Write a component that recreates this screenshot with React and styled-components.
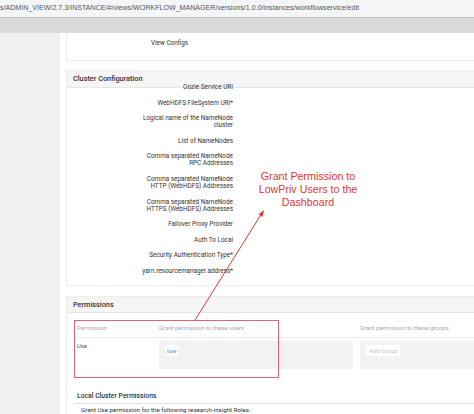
import React from "react"
import styled, {createGlobalStyle} from "styled-components"

const GlobalStyle = createGlobalStyle`
  html, body {
    margin: 0;
    padding: 0;
    background: #fff;
    overflow: hidden;
  }
`

const Page = styled.div`
  position: relative;
  width: 474px;
  height: 414px;
  overflow: hidden;
  display: flex;
  flex-direction: column;
  font-family: Roboto, "Liberation Sans", sans-serif;
  color: #333;
`

const UrlBar = styled.div`
  height: 17px;
  line-height: 17px;
  background: #f4f5f7;
  font-family: "Liberation Sans", Arial, sans-serif;
  font-size: 7.1px;
  color: #555;
  white-space: nowrap;
  overflow: hidden;
`

const TopBar = styled.div`
  height: 15px;
  background: #dbdbdb;
  border-top: 1px solid #c4c4c4;
`

const Body = styled.div`
  flex: 1;
  display: flex;
  min-height: 0;
`

const Sidebar = styled.div`
  width: 60px;
  flex-shrink: 0;
  background: #f0f0f0;
`

const Main = styled.div`
  flex: 1;
  padding-left: 6px;
  overflow: hidden;
`

const Panel = styled.div`
  width: calc(100% + 20px);
  border: 1px solid #ececec;
  border-top: ${p => p.$open ? "none" : "1px solid #ececec"};
  background: #fff;
  margin-bottom: ${p => p.$gap || 0}px;
`

const PanelHeader = styled.div`
  height: ${p => p.$h}px;
  line-height: ${p => p.$h}px;
  padding-left: 6px;
  background: #f5f5f5;
  border-bottom: 1px solid #e6e6e6;
  font-size: 7.3px;
  font-weight: 500;
  color: #333;
`

const ViewConfigs = styled.div`
  height: 27px;
  padding: 7px 0 0 84px;
  box-sizing: border-box;
  font-size: 6.4px;
  line-height: 7px;
  color: #333;
`

const FieldList = styled.div`
  margin-top: -4px;
  padding-bottom: 10px;
  display: flex;
  flex-direction: column;
  gap: 8.6px;
`

const FieldLabel = styled.div`
  width: 166px;
  text-align: right;
  font-size: 6.4px;
  line-height: 7px;
  color: #333;
  white-space: nowrap;
`

const PermBody = styled.div`
  padding: 6px 0 0 8px;
`

const PermTable = styled.div`
  display: grid;
  grid-template-columns: 84px 201px 1fr;
  font-size: 6px;
`

const HeadCell = styled.div`
  height: 18px;
  line-height: 18px;
  color: #a8a8a8;
  border-bottom: 1px solid #ececec;
  padding-left: ${p => p.$pad || 0}px;
  white-space: nowrap;
`

const RowLabel = styled.div`
  padding: 4px 0 0 2px;
  line-height: 8px;
  color: #555;
`

const PickBox = styled.div`
  margin: 3px ${p => p.$gutter || 0}px 0 0;
  height: 28px;
  background: #f2f2f2;
  border-radius: 1px;
  padding: 4px 6px;
  box-sizing: border-box;
`

const Tag = styled.span`
  display: inline-block;
  height: 11px;
  line-height: 11px;
  padding: 0 ${p => p.$placeholder ? 3 : 2}px;
  background: #fff;
  color: ${p => p.$placeholder ? "#c4c4c4" : "#3a8dbd"};
`

const SubTitle = styled.div`
  margin: 23px 0 0 -1px;
  padding: 0 0 3px 3px;
  border-bottom: 1px solid #e4e4e4;
  font-size: 6.8px;
  line-height: 8px;
  font-weight: 500;
  color: #333;
`

const SubText = styled.div`
  padding: 2px 0 0 6px;
  font-size: 6.2px;
  line-height: 8px;
  color: #333;
  white-space: nowrap;
`

const Highlight = styled.div`
  position: absolute;
  left: 74px;
  top: 320px;
  width: 205px;
  height: 58px;
  box-sizing: border-box;
  border: 1.5px solid #e4646d;
`

const Callout = styled.div`
  position: absolute;
  left: 248px;
  top: 170px;
  width: 120px;
  text-align: center;
  font-family: "Liberation Sans", Arial, sans-serif;
  font-size: 10.7px;
  line-height: 13px;
  color: #e2372f;
`

const ArrowLayer = styled.svg`
  position: absolute;
  left: 0;
  top: 0;
  pointer-events: none;
`

const fields = [
  ["Oozie Service URI"],
  ["WebHDFS FileSystem URI*"],
  ["Logical name of the NameNode", "cluster"],
  ["List of NameNodes"],
  ["Comma separated NameNode", "RPC Addresses"],
  ["Comma separated NameNode", "HTTP (WebHDFS) Addresses"],
  ["Comma separated NameNode", "HTTPS (WebHDFS) Addresses"],
  ["Failover Proxy Provider"],
  ["Auth To Local"],
  ["Security Authentication Type*"],
  ["yarn.resourcemanager.address*"]
]

const App = () => (
  <Page>
    <GlobalStyle/>
    <UrlBar>s/ADMIN_VIEW/2.7.3/INSTANCE/#/views/WORKFLOW_MANAGER/versions/1.0.0/instances/workflowservice/edit</UrlBar>
    <TopBar/>
    <Body>
      <Sidebar/>
      <Main>
        <Panel $open $gap={9}>
          <ViewConfigs>View Configs</ViewConfigs>
        </Panel>

        <Panel $gap={10}>
          <PanelHeader $h={16}>Cluster Configuration</PanelHeader>
          <FieldList>
            {fields.map((lines, i) => (
              <FieldLabel key={i}>
                {lines.map((line, j) => <div key={j}>{line}</div>)}
              </FieldLabel>
            ))}
          </FieldList>
        </Panel>

        <Panel>
          <PanelHeader $h={15}>Permissions</PanelHeader>
          <PermBody>
            <PermTable>
              <HeadCell $pad={2}>Permission</HeadCell>
              <HeadCell>Grant permission to these users</HeadCell>
              <HeadCell>Grant permission to these groups</HeadCell>
              <RowLabel>Use</RowLabel>
              <PickBox $gutter={7}><Tag>low</Tag></PickBox>
              <PickBox><Tag $placeholder>Add Group</Tag></PickBox>
            </PermTable>
            <SubTitle>Local Cluster Permissions</SubTitle>
            <SubText>Grant Use permission for the following research-insight Roles:</SubText>
          </PermBody>
        </Panel>
      </Main>
    </Body>

    <Highlight/>
    <Callout>
      Grant Permission to<br/>LowPriv Users to the<br/>Dashboard
    </Callout>
    <ArrowLayer width="474" height="414" viewBox="0 0 474 414">
      <line x1="195" y1="320" x2="262" y2="213" stroke="#e2372f" strokeWidth="1"/>
      <polygon points="264,210 258.5,214.5 262.5,217" fill="#e2372f"/>
    </ArrowLayer>
  </Page>
)

export default App
